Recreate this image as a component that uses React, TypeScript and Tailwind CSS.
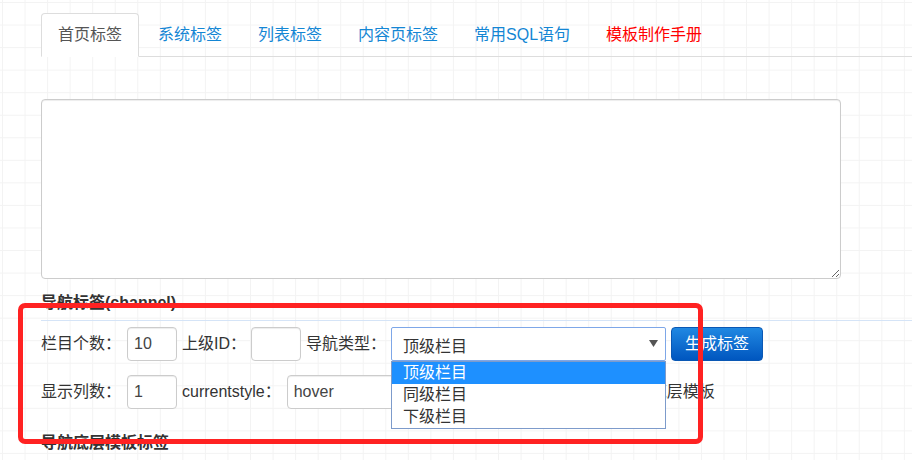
import React from "react";

const FONT = "font-['Liberation_Sans','Noto_Sans_CJK_SC',sans-serif]";

type Tab = { label: string; tone: "active" | "link" | "red" };

const tabs: Tab[] = [
  { label: "首页标签", tone: "active" },
  { label: "系统标签", tone: "link" },
  { label: "列表标签", tone: "link" },
  { label: "内容页标签", tone: "link" },
  { label: "常用SQL语句", tone: "link" },
  { label: "模板制作手册", tone: "red" },
];

function TabBar() {
  return (
    <ul className="flex border-b border-[#dddddd]">
      {tabs.map((t) => (
        <li key={t.label} className="mr-[2px] mb-[-1px]">
          <a
            className={
              t.tone === "active"
                ? "block h-[44px] px-[16px] leading-[42px] text-[16px] border border-[#dddddd] border-b-white rounded-t-[4px] bg-white text-[#555555]"
                : t.tone === "red"
                ? "block h-[44px] px-[16px] leading-[42px] text-[16px] border border-transparent text-[#ff0000]"
                : "block h-[44px] px-[16px] leading-[42px] text-[16px] border border-transparent text-[#1486d4]"
            }
          >
            {t.label}
          </a>
        </li>
      ))}
    </ul>
  );
}

function Field({ value, width }: { value: string; width: string }) {
  return (
    <input
      readOnly
      value={value}
      className={`${width} h-[34px] shrink-0 rounded-[4px] border border-[#cccccc] bg-white pl-[6px] text-[16px] text-[#444444] shadow-[inset_0_1px_1px_rgba(0,0,0,0.075)] outline-none`}
    />
  );
}

function Label({ children }: { children: React.ReactNode }) {
  return <span className="shrink-0 text-[16px] leading-[22px] text-[#333333]">{children}</span>;
}

const navTypes = ["顶级栏目", "同级栏目", "下级栏目"];

function NavTypeSelect() {
  return (
    <div className="relative w-[275px] h-[34px] shrink-0">
      <div className="flex h-full items-center justify-between rounded-[2px] border border-[#7ea7e8] bg-white pl-[11px] pr-[7px]">
        <span className="pt-[5px] text-[16px] leading-[22px] text-[#333333]">顶级栏目</span>
        <svg width="9" height="7" viewBox="0 0 9 7" className="mb-[1px]">
          <polygon points="0,0 9,0 4.5,7" fill="#555555" />
        </svg>
      </div>
      {/* open option list */}
      <ul className="absolute left-0 top-[34px] z-10 w-[275px] border border-[#7d9bcb] bg-white">
        {navTypes.map((n, i) => (
          <li
            key={n}
            className={
              i === 0
                ? "h-[22px] pl-[11px] text-[16px] leading-[22px] bg-[#1e90ff] text-white"
                : "h-[22px] pl-[11px] text-[16px] leading-[22px] text-[#333333]"
            }
          >
            {n}
          </li>
        ))}
      </ul>
    </div>
  );
}

export default function App() {
  return (
    <div
      className={`relative w-[912px] h-[460px] overflow-hidden bg-white bg-[linear-gradient(to_right,#f3f3f3_1px,transparent_1px),linear-gradient(to_bottom,#f3f3f3_1px,transparent_1px)] bg-[size:22.56px_22.56px] bg-[position:2px_2px] ${FONT}`}
    >
      <div className="pl-[41px] pt-[13px]">
        <TabBar />

        <textarea
          readOnly
          className="mt-[42px] block w-[800px] h-[180px] rounded-[4px] border border-[#cccccc] bg-white shadow-[inset_0_1px_1px_rgba(0,0,0,0.075)] outline-none"
        />

        <h3 className="mt-[13px] h-[22px] text-[16px] font-bold leading-[22px] text-[#333333]">
          导航标签(channel)
        </h3>
        <div className="mt-[6px] h-px bg-[#d5e4f7]" />

        <div className="mt-[6px] flex h-[34px] items-center">
          <Label>栏目个数：</Label>
          <div className="w-[6px]" />
          <Field value="10" width="w-[50px]" />
          <div className="w-[5px]" />
          <Label>上级ID：</Label>
          <div className="w-[5px]" />
          <Field value="" width="w-[50px]" />
          <div className="w-[5px]" />
          <Label>导航类型：</Label>
          <div className="w-[5px]" />
          <NavTypeSelect />
          <div className="w-[5px]" />
          <button className="h-[34px] shrink-0 rounded-[4px] border border-[#0a58b4] bg-[linear-gradient(to_bottom,#2088e2,#0056bf)] px-[13px] text-[16px] leading-[22px] text-white">
            生成标签
          </button>
        </div>

        <div className="mt-[14px] flex h-[34px] items-center">
          <Label>显示列数：</Label>
          <div className="w-[6px]" />
          <Field value="1" width="w-[50px]" />
          <div className="w-[5px]" />
          <Label>currentstyle：</Label>
          <div className="w-[6px]" />
          <Field value="hover" width="w-[322px]" />
          <div className="w-[10px]" />
          <Label>调用底层模板</Label>
        </div>

        <h3 className="mt-[23px] h-[22px] text-[16px] font-bold leading-[22px] text-[#333333]">
          导航底层模板标签
        </h3>
      </div>

      {/* red highlight frame */}
      <div className="pointer-events-none absolute left-[18px] top-[303px] z-20 h-[141px] w-[685px] rounded-[7px] border-[5px] border-[#ff2222]" />
    </div>
  );
}
